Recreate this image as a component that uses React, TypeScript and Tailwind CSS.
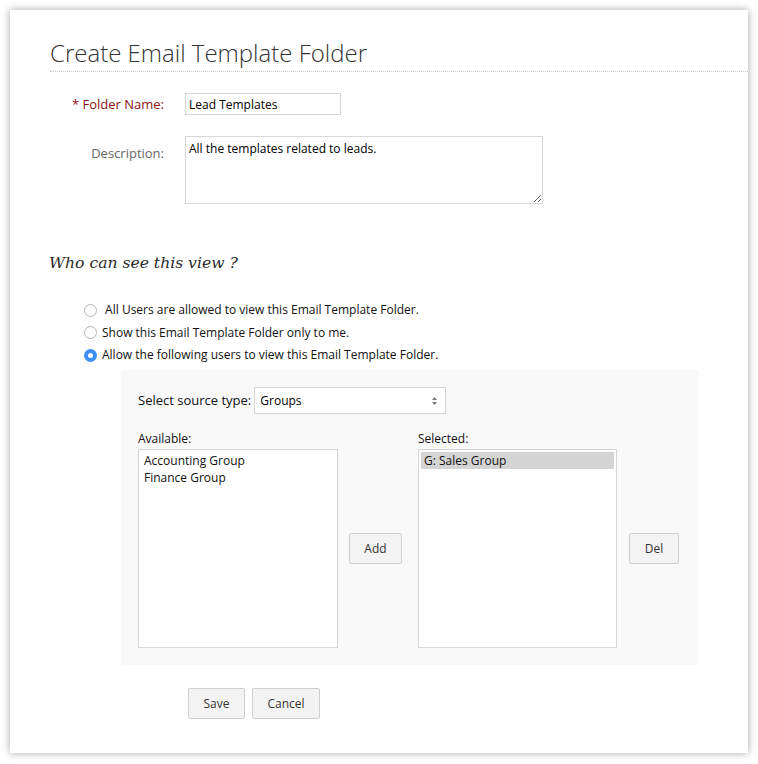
import React from 'react'

function Radio({ checked }: { checked?: boolean }) {
  if (checked) {
    return (
      <span className="flex h-[13px] w-[13px] shrink-0 items-center justify-center rounded-full bg-[#3b8ff6]">
        <span className="h-[5px] w-[5px] rounded-full bg-white" />
      </span>
    )
  }
  return <span className="h-[13px] w-[13px] shrink-0 rounded-full border border-[#b5b5b5] bg-white" />
}

function Button({ children, width }: { children: React.ReactNode; width: string }) {
  return (
    <button
      type="button"
      className={`h-[31px] ${width} rounded-[2px] border border-[#cfcfcf] bg-[#f3f3f3] text-[12px] text-[#333]`}
    >
      {children}
    </button>
  )
}

export default function App() {
  return (
    <div className="min-h-screen bg-white p-[10px] font-['Open_Sans',sans-serif] text-[12px] text-[#222]">
      <div className="h-[743px] w-[738px] bg-white pt-[27px] pb-[35px] shadow-[0_0_8px_rgba(0,0,0,0.35)]">
        {/* Title */}
        <h1 className="ml-[40px] border-b border-dotted border-[#c8c8c8] pb-[2px] text-[24px] leading-[32px] font-light text-[#333]">
          Create Email Template Folder
        </h1>

        {/* Form */}
        <div className="ml-[40px]">
          <div className="mt-[21px] flex items-center">
            <label className="w-[114px] text-right text-[13px] leading-[18px] text-[#8b0f0f]">* Folder Name:</label>
            <input
              className="ml-[21px] h-[22px] w-[156px] border border-[#d6d6d6] px-[3px] text-[12px] text-black outline-none"
              defaultValue="Lead Templates"
            />
          </div>
          <div className="mt-[21px] flex items-start">
            <label className="mt-[8px] w-[114px] text-right text-[13px] leading-[18px] text-[#666]">Description:</label>
            <textarea
              className="ml-[21px] h-[68px] w-[358px] border border-[#d6d6d6] px-[3px] py-[3px] text-[12px] leading-[17px] text-black outline-none"
              defaultValue="All the templates related to leads."
            />
          </div>
        </div>

        {/* Visibility */}
        <h2 className="mt-[47px] ml-[39px] font-['DejaVu_Serif',serif] text-[15.6px] leading-[24px] italic text-[#2a2a2a]">
          Who can see this view ?
        </h2>

        <div className="mt-[24px] ml-[74px] text-[12px] leading-[22px] text-[#111]">
          <div className="flex h-[22px] items-center gap-[5px]">
            <Radio />
            <span>&nbsp;All Users are allowed to view this Email Template Folder.</span>
          </div>
          <div className="flex h-[23px] items-center gap-[5px]">
            <Radio />
            <span>Show this Email Template Folder only to me.</span>
          </div>
          <div className="flex h-[22px] items-center gap-[5px]">
            <Radio checked />
            <span>Allow the following users to view this Email Template Folder.</span>
          </div>
        </div>

        {/* Source panel */}
        <div className="mt-[4px] ml-[111px] w-[578px] bg-[#f9f9f9] px-[17px] pt-[17px] pb-[17px]">
          <div className="flex items-center gap-[3px]">
            <span className="text-[13px] text-[#111]">Select source type:</span>
            <div className="flex h-[27px] w-[192px] items-center justify-between border border-[#d6d6d6] bg-white pr-[8px] pl-[5px]">
              <span className="text-[12px] text-black">Groups</span>
              <svg width="5" height="8" viewBox="0 0 5 8" fill="#777">
                <path d="M2.5 0 L5 3 H0 Z" />
                <path d="M2.5 8 L5 5 H0 Z" />
              </svg>
            </div>
          </div>

          <div className="mt-[16px] flex items-center text-[#111]">
            <div className="flex flex-col">
              <span className="leading-[18px]">Available:</span>
              <div className="mt-[1px] h-[199px] w-[200px] border border-[#d6d6d6] bg-white p-[2px]">
                <div className="px-[3px] leading-[17px]">Accounting Group</div>
                <div className="px-[3px] leading-[17px]">Finance Group</div>
              </div>
            </div>
            <div className="ml-[11px] mt-[19px]">
              <Button width="w-[53px]">Add</Button>
            </div>
            <div className="ml-[16px] flex flex-col">
              <span className="leading-[18px]">Selected:</span>
              <div className="mt-[1px] h-[199px] w-[199px] border border-[#d6d6d6] bg-white p-[2px]">
                <div className="bg-[#d4d4d4] px-[3px] leading-[17px]">G: Sales Group</div>
              </div>
            </div>
            <div className="ml-[12px] mt-[19px]">
              <Button width="w-[50px]">Del</Button>
            </div>
          </div>
        </div>

        {/* Actions */}
        <div className="mt-[23px] ml-[178px] flex gap-[7px]">
          <Button width="w-[57px]">Save</Button>
          <Button width="w-[68px]">Cancel</Button>
        </div>
      </div>
    </div>
  )
}
